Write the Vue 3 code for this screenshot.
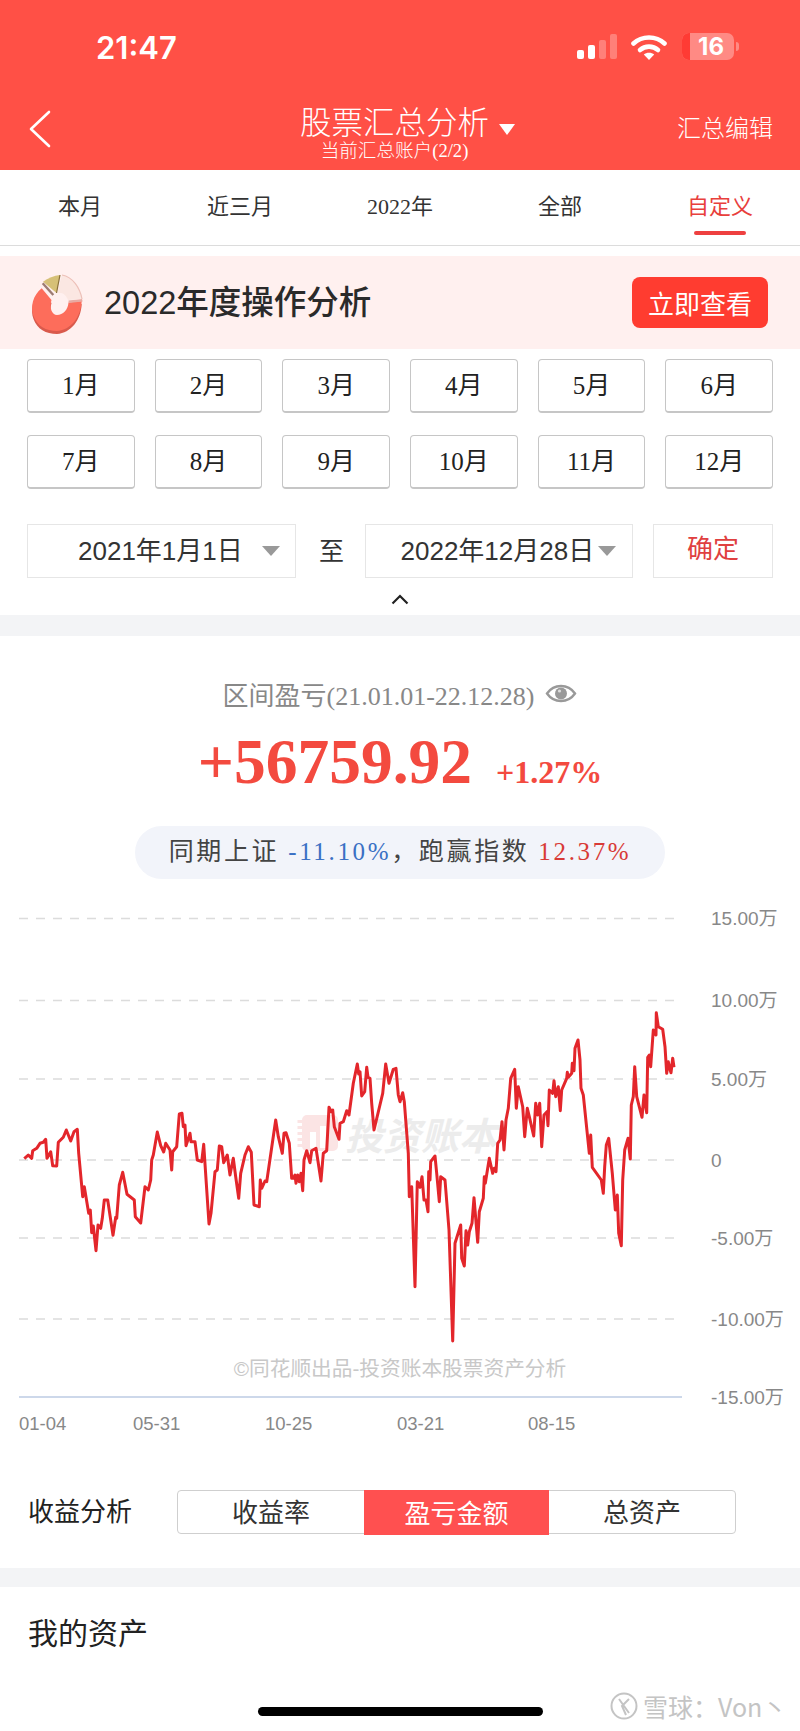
<script setup>
const tabs = ['本月', '近三月', '2022年', '全部', '自定义']
const months = ['1月', '2月', '3月', '4月', '5月', '6月', '7月', '8月', '9月', '10月', '11月', '12月']
const segs = ['收益率', '盈亏金额', '总资产']

// y axis, positions relative to the chart box
const grid = [
  { y: 18.5, label: '15.00万' },
  { y: 100.5, label: '10.00万' },
  { y: 179, label: '5.00万' },
  { y: 260, label: '0' },
  { y: 338, label: '-5.00万' },
  { y: 419, label: '-10.00万' }
]
const dates = [
  { x: 19, label: '01-04' },
  { x: 133, label: '05-31' },
  { x: 265, label: '10-25' },
  { x: 397, label: '03-21' },
  { x: 528, label: '08-15' }
]

// traced from the curve, 3 units per px, y starts at 980 on the page
const left = [73,536,85,525,95,535,98,512,110,505,120,490,130,487,137,478,141,535,152,515,158,557,170,558,175,487,190,472,199,450,212,483,222,455,232,448,236,520,248,650,253,620,266,700,271,690,275,758,280,738,288,812,294,735,302,745,307,715,313,660,323,660,339,766,347,712,350,715,358,615,368,577,381,643,403,660,406,710,422,729,435,620,445,630,452,600,455,540,460,525,472,456,482,497,491,516,497,490,510,510,515,570,518,515,530,500,538,402,546,400,550,440,555,435,558,497,570,460,573,485,585,485,592,540,605,545,611,493,627,732,633,700,645,575,652,570,658,498,665,500,671,548,682,525,690,585,700,535,707,590,716,655,722,580,735,525,745,500,754,517,762,675,778,680,781,600,785,625,795,603,800,605,827,420,835,470,847,520,852,460,858,458,868,490,875,595,880,595,885,585,888,610,893,585,898,605,903,580,908,632,912,540,920,512,930,548,935,512,948,505,963,603,970,520,980,512,987,382,994,395,998,390,1003,440,1017,478,1020,430,1030,425,1040,392,1047,405,1060,310,1072,252,1076,282,1080,275,1085,348,1094,335,1100,262,1104,292,1110,295,1115,370,1122,450,1148,340,1157,252,1167,310,1180,268,1188,265,1195,345]
const right = [0,365,8,338,13,365,25,520,28,650,35,620,45,920,52,605,60,622,66,590,72,660,78,660,84,695,86,575,90,600,92,545,105,528,110,580,118,665,122,590,135,600,147,750,158,1083,165,790,182,735,185,835,193,858,198,752,203,795,208,755,216,730,222,653,233,787,238,695,250,655,253,590,256,610,268,535,278,580,283,565,288,575,293,490,300,480,306,425,312,510,318,420,325,385,332,295,344,268,349,385,355,320,368,380,374,470,382,385,388,410,401,468,407,370,413,405,419,370,425,500,432,405,441,395,444,437,448,330,458,340,462,302,467,350,475,320,481,392,485,330,500,295,502,277,505,292,515,280,517,250,522,272,525,205,534,180,540,240,543,325,550,345,568,520,572,465,577,562,604,600,610,640,614,560,619,495,626,475,637,580,646,690,652,645,656,760,664,797,668,600,674,510,684,475,691,537,694,375,700,350,704,260,710,350,726,412,732,345,740,398,743,232,748,225,752,260,760,150,768,165,769,98,775,140,788,148,795,200,800,280,805,245,809,265,813,278,818,235,822,262]

const toPoints = (arr, dx) => {
  const out = []
  for (let i = 0; i < arr.length; i += 2) {
    out.push((arr[i] / 3 + dx).toFixed(1) + ',' + (arr[i + 1] / 3 + 80).toFixed(1))
  }
  return out.join(' ')
}
const curve = toPoints(left, 0) + ' ' + toPoints(right, 400)
</script>

<template>
  <div class="page">
    <header class="head">
      <div class="status">
        <span class="time">21:47</span>
        <div class="status-icons">
          <div class="signal">
            <i class="b1"></i><i class="b2"></i><i class="b3"></i><i class="b4"></i>
          </div>
          <svg class="wifi" width="36" height="27" viewBox="0 0 36 27">
            <path d="M2.5 10.5C11 2.5 25 2.5 33.5 10.5" fill="none" stroke="#fff" stroke-width="4.6" stroke-linecap="round" />
            <path d="M9 17C14 12.5 22 12.5 27 17" fill="none" stroke="#fff" stroke-width="4.6" stroke-linecap="round" />
            <path d="M12.8 21.6C15.6 19 20.4 19 23.2 21.6L18 27Z" fill="#fff" />
          </svg>
          <div class="battery">
            <span class="batt-left"></span>
            <span class="batt-num">16</span>
          </div>
          <span class="nub"></span>
        </div>
      </div>
      <div class="nav">
        <svg class="back" width="24" height="38" viewBox="0 0 24 38">
          <path d="M21 2L3 19L21 36" fill="none" stroke="#fff" stroke-width="2.6" stroke-linecap="round" stroke-linejoin="round" />
        </svg>
        <div class="nav-center">
          <div class="nav-title">股票汇总分析<span class="tri"></span></div>
          <div class="nav-sub">当前汇总账户(2/2)</div>
        </div>
        <span class="nav-edit">汇总编辑</span>
      </div>
    </header>

    <nav class="tabs">
      <div class="tab" v-for="(t, i) in tabs" :key="t" :class="{ on: i === 4 }">{{ t }}</div>
    </nav>

    <section class="banner">
      <svg class="pie" width="56" height="64" viewBox="0 0 56 64">
        <path d="M11.7 19.3C3 26 0 38 3.5 47C7 57 16 62 27 62C41 61 51 48 51.7 32L38.5 33.5C38 41 33 46 27 46C22 46 19 39 21.5 31Z" fill="#d95a4c" />
        <path d="M11.7 16.3C3 23 0 35 3.5 44C7 54 16 59 27 59C41 58 51 45 51.7 29L38.5 30.5C38 38 33 43 27 43C22 43 19 36 21.5 28Z" fill="#fd6d5b" />
        <path d="M38.5 28.5L52 27L52.6 29.5L38.7 31Z" fill="#e8aaa2" />
        <path d="M32 3C43 5 50 16 52 27L38 28C37 25 34 21 31 21L27 21Z" fill="#fbe7e2" />
        <path d="M32 3C43 5 50 16 52 27" fill="none" stroke="#edc0b8" stroke-width="1.2" />
        <path d="M12.7 11.3L23.3 23" fill="none" stroke="#9d7b72" stroke-width="2.4" />
        <path d="M13 9.7C18 6 24 3.5 30 3L26.5 21Z" fill="#d6c077" />
        <path d="M30 3L26.5 21" fill="none" stroke="#8a6f3a" stroke-width="1.2" />
      </svg>
      <span class="banner-text">2022年度操作分析</span>
      <button class="banner-btn">立即查看</button>
    </section>

    <div class="months">
      <div class="month" v-for="m in months" :key="m">{{ m }}</div>
    </div>

    <div class="range">
      <div class="date-box first">
        <span>2021年1月1日</span>
        <i class="down"></i>
      </div>
      <span class="to">至</span>
      <div class="date-box second">
        <span>2022年12月28日</span>
        <i class="down"></i>
      </div>
      <div class="ok">确定</div>
    </div>

    <div class="fold">
      <svg width="18" height="11" viewBox="0 0 18 11">
        <path d="M1.5 9.5L9 2L16.5 9.5" fill="none" stroke="#222" stroke-width="2.2" />
      </svg>
    </div>

    <div class="band"></div>

    <section class="summary">
      <div class="sum-title">
        <span>区间盈亏(21.01.01-22.12.28)</span>
        <svg class="eye" width="32" height="21" viewBox="0 0 32 21">
          <path d="M2 10.5C9 0.5 23 0.5 30 10.5C23 20.5 9 20.5 2 10.5Z" fill="none" stroke="#999" stroke-width="2.4" />
          <circle cx="16" cy="10.5" r="6" fill="#999" />
          <circle cx="14.5" cy="8" r="1.6" fill="#ddd" />
        </svg>
      </div>
      <div class="amount">
        <span class="big">+56759.92</span>
        <span class="pct">+1.27%</span>
      </div>
      <div class="pill">
        同期上证 <span class="blue">-11.10%</span>，跑赢指数 <span class="red">12.37%</span>
      </div>
    </section>

    <div class="chart">
      <svg width="800" height="540" viewBox="0 0 800 540">
        <g v-for="g in grid" :key="g.label">
          <line x1="19" x2="682" :y1="g.y" :y2="g.y" stroke="#dcdcdc" stroke-width="1.4" stroke-dasharray="9 8" />
          <text class="axis" x="711" :y="g.y + 6.5">{{ g.label }}</text>
        </g>
        <line x1="19" x2="682" y1="497" y2="497" stroke="#bccbe3" stroke-width="1.5" />
        <text class="axis" x="711" y="504">-15.00万</text>
        <text class="axis dates" v-for="d in dates" :key="d.label" :x="d.x" y="530">{{ d.label }}</text>

        <line x1="300" x2="300" y1="220" y2="248" stroke="#fbe4e4" stroke-width="5" stroke-dasharray="3 3" />
        <rect x="302" y="215" width="36" height="36" rx="5" fill="#fbe4e4" />
        <path d="M310 248V232H316V248ZM320 248V226H326V248Z" fill="#fff" />
        <text class="mark" x="345" y="250">投资账本</text>
        <polyline :points="curve" fill="none" stroke="#e3262b" stroke-width="3" stroke-linejoin="round" />
        <text class="copy" x="400" y="476" text-anchor="middle">©同花顺出品-投资账本股票资产分析</text>
      </svg>
    </div>

    <section class="seg-row">
      <span class="seg-label">收益分析</span>
      <div class="seg">
        <div class="seg-item" v-for="(s, i) in segs" :key="s" :class="{ on: i === 1 }">{{ s }}</div>
      </div>
    </section>

    <div class="band small"></div>

    <div class="assets">我的资产</div>

    <div class="home-bar"></div>
    <div class="xq">
      <svg width="30" height="28" viewBox="0 0 30 28">
        <ellipse cx="15" cy="14" rx="12.5" ry="12.5" fill="none" stroke="#c4c4c4" stroke-width="2" />
        <path d="M10 7L20 21M20 7L13 14L17 23" fill="none" stroke="#c4c4c4" stroke-width="2" />
      </svg>
      <span class="xq-text">雪球：Von丶</span>
    </div>
  </div>
</template>

<style>
html, body {
  margin: 0;
  background: #fff;
}
</style>

<style scoped>
.page {
  position: relative;
  width: 800px;
  height: 1731px;
  overflow: hidden;
  background: #fff;
  font-family: "Liberation Serif", "Noto Sans CJK SC", serif;
  color: #222;
}

.head {
  height: 170px;
  background: #ff5046;
  color: #fff;
}

.status {
  height: 90px;
  display: flex;
  justify-content: space-between;
  box-sizing: border-box;
  padding: 34px 61px 0 96px;
}

.time {
  font-family: "Inter", "Liberation Sans", sans-serif;
  font-size: 31px;
  font-weight: 600;
  line-height: 28px;
}

.status-icons {
  display: flex;
  align-items: flex-start;
  margin-top: -1px;
}

.signal {
  display: flex;
  align-items: flex-end;
  gap: 4px;
  height: 25px;
  margin: 1px 14px 0 0;
}

.signal i {
  display: block;
  width: 7px;
  border-radius: 2px;
  background: #fff;
}

.signal .b1 { height: 9px; }
.signal .b2 { height: 14px; }
.signal .b3 { height: 19px; background: rgba(255, 255, 255, 0.28); }
.signal .b4 { height: 25px; background: rgba(255, 255, 255, 0.28); }

.wifi {
  margin-right: 15px;
}

.battery {
  position: relative;
  width: 52px;
  height: 27px;
  border-radius: 7px;
  background: #ff8a84;
  overflow: hidden;
  text-align: center;
}

.batt-left {
  position: absolute;
  left: 0;
  top: 0;
  bottom: 0;
  width: 8px;
  background: #ff3b34;
}

.batt-num {
  position: relative;
  left: 3px;
  font-family: "Inter", "Liberation Sans", sans-serif;
  font-size: 24px;
  font-weight: 700;
  line-height: 27px;
}

.nub {
  width: 3px;
  height: 9px;
  margin: 9px 0 0 2px;
  border-radius: 0 3px 3px 0;
  background: #ff8a84;
}

.nav {
  height: 80px;
  display: grid;
  grid-template-columns: 1fr auto 1fr;
  padding: 0 27px 0 28px;
  box-sizing: border-box;
}

.back {
  margin-top: 20px;
}

.nav-center {
  margin-right: 12px;
  text-align: center;
  font-weight: 300;
}

.nav-title {
  position: relative;
  margin-top: 13px;
  font-size: 31.5px;
  line-height: 34px;
  font-family: "Noto Sans CJK SC", sans-serif;
}

.tri {
  position: absolute;
  left: 199px;
  top: 21px;
  border-left: 8px solid transparent;
  border-right: 8px solid transparent;
  border-top: 11px solid #fff;
}

.nav-sub {
  margin-top: 2px;
  font-size: 18.6px;
  line-height: 24px;
}

.nav-edit {
  justify-self: end;
  margin-top: 23px;
  font-size: 24px;
  line-height: 32px;
  font-weight: 300;
}

.tabs {
  height: 76px;
  display: grid;
  grid-template-columns: repeat(5, 1fr);
  border-bottom: 1.5px solid #dcdcdc;
  box-sizing: border-box;
}

.tab {
  text-align: center;
  font-size: 22px;
  line-height: 74px;
  color: #333;
}

.tab.on {
  position: relative;
  color: #e8403c;
}

.tab.on::after {
  content: "";
  position: absolute;
  left: 54px;
  top: 61px;
  width: 52px;
  height: 4px;
  border-radius: 2px;
  background: #ee4040;
}

.banner {
  margin-top: 10px;
  height: 93px;
  display: flex;
  align-items: center;
  padding: 0 32px 0 30px;
  background: #fff0ef;
}

.pie {
  margin: 3px 18px 0 0;
}

.banner-text {
  flex: 1;
  margin-top: -6px;
  font-family: "Liberation Sans", "Noto Sans CJK SC", sans-serif;
  font-size: 32.5px;
  font-weight: 500;
  color: #2a2a2a;
}

.banner-btn {
  width: 136px;
  height: 51px;
  border: 0;
  border-radius: 8px;
  background: #ff3c30;
  color: #fff;
  font-family: "Noto Sans CJK SC", sans-serif;
  font-size: 26px;
}

.months {
  margin-top: 10px;
  padding: 0 27px;
  display: grid;
  grid-template-columns: repeat(6, 1fr);
  gap: 22px 20px;
}

.month {
  height: 54px;
  box-sizing: border-box;
  border: 1.5px solid #c6c6c6;
  border-bottom-width: 2px;
  border-radius: 4px;
  text-align: center;
  font-size: 25px;
  line-height: 52px;
  color: #222;
}

.range {
  margin-top: 35px;
  padding: 0 27px;
  display: flex;
  height: 54px;
  font-family: "Liberation Sans", "Noto Sans CJK SC", sans-serif;
}

.date-box {
  position: relative;
  width: 269px;
  box-sizing: border-box;
  border: 1.5px solid #e6e6e6;
  font-size: 26px;
  line-height: 53px;
  color: #333;
}

.date-box.first span { margin-left: 50px; }
.date-box.second span { margin-left: 35px; }

.down {
  position: absolute;
  top: 21px;
  right: 15px;
  border-left: 9px solid transparent;
  border-right: 9px solid transparent;
  border-top: 10px solid #999;
}

.date-box.second .down {
  right: 16px;
}

.to {
  width: 69px;
  padding-left: 3px;
  box-sizing: border-box;
  text-align: center;
  font-family: "Noto Sans CJK SC", sans-serif;
  font-size: 25px;
  line-height: 50px;
  color: #333;
}

.ok {
  width: 120px;
  margin-left: 20px;
  box-sizing: border-box;
  border: 1.5px solid #e6e6e6;
  text-align: center;
  font-size: 26px;
  line-height: 48px;
  color: #e04040;
}

.fold {
  height: 37px;
  display: flex;
  justify-content: center;
  padding-top: 16px;
  box-sizing: border-box;
}

.band {
  height: 21px;
  background: #f3f4f6;
}

.band.small {
  height: 19px;
}

.summary {
  padding-top: 42px;
  display: flex;
  flex-direction: column;
  align-items: center;
}

.sum-title {
  height: 30px;
  display: flex;
  align-items: center;
  gap: 11px;
  font-size: 26px;
  color: #888;
}

.amount {
  margin-top: 19px;
  height: 70px;
  display: flex;
  align-items: baseline;
  gap: 24px;
  font-weight: 700;
  color: #f34a3f;
}

.big {
  font-size: 63.5px;
  line-height: 70px;
}

.pct {
  font-size: 32px;
}

.pill {
  margin-top: 29px;
  width: 530px;
  height: 53px;
  border-radius: 27px;
  background: #f2f4fa;
  text-align: center;
  font-size: 25px;
  line-height: 52px;
  letter-spacing: 2.65px;
  color: #444;
}

.blue { color: #3a70c4; }
.red { color: #d83a36; }

.chart {
  margin-top: 21px;
  height: 540px;
}

.chart svg {
  display: block;
}

.axis {
  font-family: "Liberation Sans", "Noto Sans CJK SC", sans-serif;
  font-size: 19px;
  fill: #888;
}

.axis.dates {
  font-size: 18.5px;
}

.mark {
  font-family: "Noto Sans CJK SC", sans-serif;
  font-size: 38px;
  font-weight: 700;
  font-style: italic;
  fill: #ececec;
}

.copy {
  font-family: "Liberation Sans", "Noto Sans CJK SC", sans-serif;
  font-size: 20.7px;
  fill: #c8c8c8;
}

.seg-row {
  padding: 50px 0 34px 28px;
  display: flex;
  align-items: center;
  font-family: "Noto Sans CJK SC", sans-serif;
}

.seg-label {
  width: 149px;
  margin-top: -5px;
  font-size: 26px;
  color: #222;
}

.seg {
  width: 559px;
  height: 44px;
  display: grid;
  grid-template-columns: 186px 185px 1fr;
  box-sizing: border-box;
  border: 1.5px solid #cfcfcf;
  border-radius: 4px;
}

.seg-item {
  text-align: center;
  font-size: 26px;
  line-height: 40px;
  color: #333;
}

.seg-item.on {
  margin: -1.5px 0;
  line-height: 43px;
  background: #ff5050;
  color: #fff;
}

.assets {
  padding: 26px 0 0 28px;
  font-family: "Noto Sans CJK SC", sans-serif;
  font-size: 30px;
  line-height: 36px;
  color: #222;
}

.home-bar {
  position: absolute;
  left: 258px;
  top: 1707px;
  width: 285px;
  height: 9px;
  border-radius: 5px;
  background: #000;
}

.xq {
  position: absolute;
  left: 609px;
  top: 1692px;
  display: flex;
  align-items: center;
  gap: 4px;
}

.xq-text {
  font-family: "Noto Sans CJK SC", sans-serif;
  font-size: 25px;
  line-height: 28px;
  color: #c4c4c4;
  white-space: nowrap;
}
</style>
